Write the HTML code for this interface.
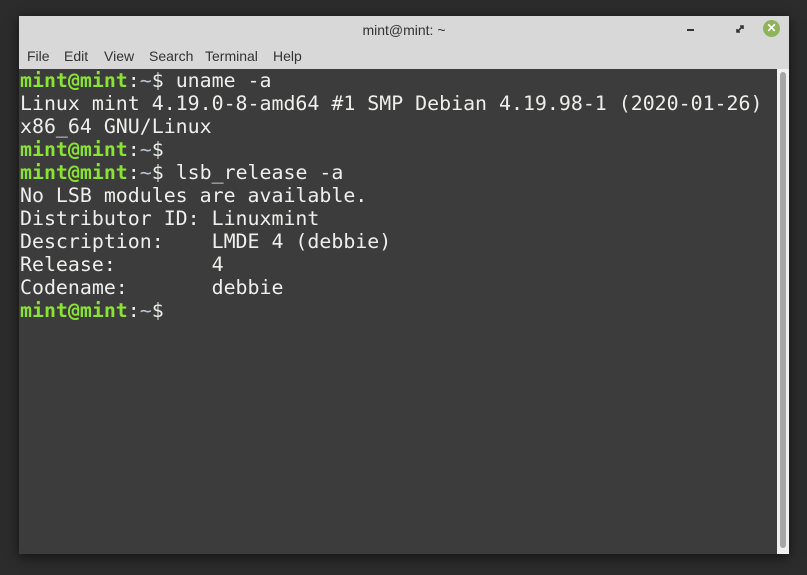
<!DOCTYPE html>
<html><head><style>
body{margin:0;width:807px;height:575px;background:#2c2c2c;overflow:hidden;position:relative;font-family:"Liberation Sans",sans-serif}
.win{position:absolute;left:19px;top:16px;width:770px;height:538px;background:#d8d8d8;box-shadow:0 3px 12px rgba(0,0,0,.6)}
.title{position:absolute;top:0;left:0;right:0;height:28px;text-align:center;line-height:28px;font-size:14px;color:#333}
.menu span{position:absolute;top:31px;font-size:14px;color:#333;line-height:18px}
.term{position:absolute;left:0;top:53px;width:758px;height:485px;background:#3c3c3c;font-family:"DejaVu Sans Mono","Liberation Mono",monospace;font-size:19.9px;line-height:23px;color:#eeeeec;white-space:pre;padding-left:1px}
.g{color:#8ae234;font-weight:bold}
.b{color:#b8c4d2}
.sb{position:absolute;left:758px;top:53px;width:12px;height:485px;background:#f0f0f0}
.th{position:absolute;left:3px;top:3px;width:6px;height:476px;background:#a6a6a6;border-radius:3px}
.close{position:absolute;left:744px;top:4px;width:17px;height:17px;border-radius:50%;background:#8fb35a;color:#fff;font-size:12px;line-height:17px;text-align:center;font-weight:bold}
</style></head><body>
<div class="win">
<div class="title">mint@mint: ~</div>
<div style="position:absolute;left:668px;top:13px;width:7px;height:2px;background:#333"></div>
<svg style="position:absolute;left:716px;top:8px" width="10" height="10"><path d="M2 8L8 2M5 2H8V5M2 5V8H5" stroke="#333" stroke-width="1.6" fill="none"/></svg>
<div class="close">✕</div>
<div class="menu"><span style="left:8px">File</span><span style="left:45px">Edit</span><span style="left:85px">View</span><span style="left:130px">Search</span><span style="left:186px">Terminal</span><span style="left:254px">Help</span></div>
<div class="term"><span class="g">mint@mint</span>:<span class="b">~</span>$ uname -a
Linux mint 4.19.0-8-amd64 #1 SMP Debian 4.19.98-1 (2020-01-26)
x86_64 GNU/Linux
<span class="g">mint@mint</span>:<span class="b">~</span>$
<span class="g">mint@mint</span>:<span class="b">~</span>$ lsb_release -a
No LSB modules are available.
Distributor ID:	Linuxmint
Description:	LMDE 4 (debbie)
Release:	4
Codename:	debbie
<span class="g">mint@mint</span>:<span class="b">~</span>$</div>
<div class="sb"><div class="th"></div></div>
</div>
</body></html>
